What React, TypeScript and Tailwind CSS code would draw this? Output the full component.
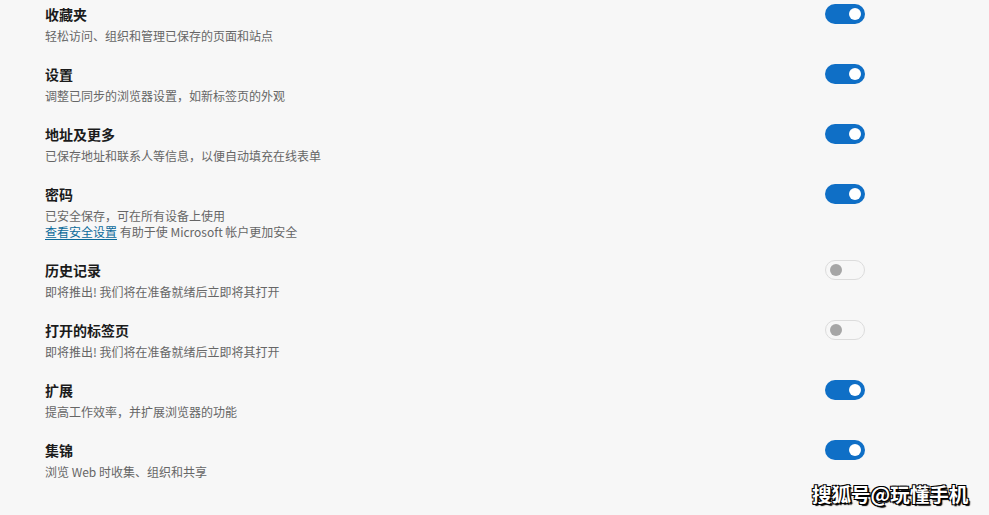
import React from "react";

type Item = {
  title: string;
  desc: string;
  on: boolean;
  extra?: boolean;
};

const items: Item[] = [
  { title: "收藏夹", desc: "轻松访问、组织和管理已保存的页面和站点", on: true },
  { title: "设置", desc: "调整已同步的浏览器设置，如新标签页的外观", on: true },
  { title: "地址及更多", desc: "已保存地址和联系人等信息，以便自动填充在线表单", on: true },
  { title: "密码", desc: "已安全保存，可在所有设备上使用", on: true, extra: true },
  { title: "历史记录", desc: "即将推出! 我们将在准备就绪后立即将其打开", on: false },
  { title: "打开的标签页", desc: "即将推出! 我们将在准备就绪后立即将其打开", on: false },
  { title: "扩展", desc: "提高工作效率，并扩展浏览器的功能", on: true },
  { title: "集锦", desc: "浏览 Web 时收集、组织和共享", on: true },
];

function Toggle({ on }: { on: boolean }) {
  if (on) {
    return (
      <div className="flex h-[20px] w-[40px] shrink-0 items-center justify-end rounded-full bg-[#0f6fc6] pr-[4px]">
        <div className="h-[12px] w-[12px] rounded-full bg-white" />
      </div>
    );
  }
  return (
    <div className="flex h-[20px] w-[40px] shrink-0 items-center justify-start rounded-full border border-[#dcdcdc] bg-[#f7f7f7] pl-[4px]">
      <div className="h-[12px] w-[12px] rounded-full bg-[#a6a6a6]" />
    </div>
  );
}

export default function App() {
  return (
    <div
      className="relative h-[515px] w-[989px] overflow-hidden bg-[#f7f7f7]"
      style={{ fontFamily: '"Noto Sans CJK SC", "Noto Sans", "Liberation Sans", sans-serif' }}
    >
      <div className="flex w-[865px] flex-col gap-[20px] pl-[45px] pt-[4px]">
        {items.map((it) => (
          <div key={it.title} className="flex items-start justify-between">
            <div className="flex flex-col">
              <div className="text-[14px] font-bold leading-[20px] text-[#1b1b1b]">{it.title}</div>
              <div className="mt-[4px] text-[12px] leading-[16px] text-[#666666]">{it.desc}</div>
              {it.extra && (
                <div className="text-[12px] leading-[16px] text-[#666666]">
                  <span className="text-[#0b6a9a] underline underline-offset-2">查看安全设置</span> 有助于使 Microsoft 帐户更加安全
                </div>
              )}
            </div>
            <Toggle on={it.on} />
          </div>
        ))}
      </div>
      <div
        className="absolute left-[812px] top-[481px] text-[19.5px] font-bold leading-[26px] text-white"
        style={{
          textShadow:
            "1px 1px 0 #000, -1px -1px 0 #000, 1px -1px 0 #000, -1px 1px 0 #000, 2px 2px 1px #000",
        }}
      >
        搜狐号@玩懂手机
      </div>
    </div>
  );
}
